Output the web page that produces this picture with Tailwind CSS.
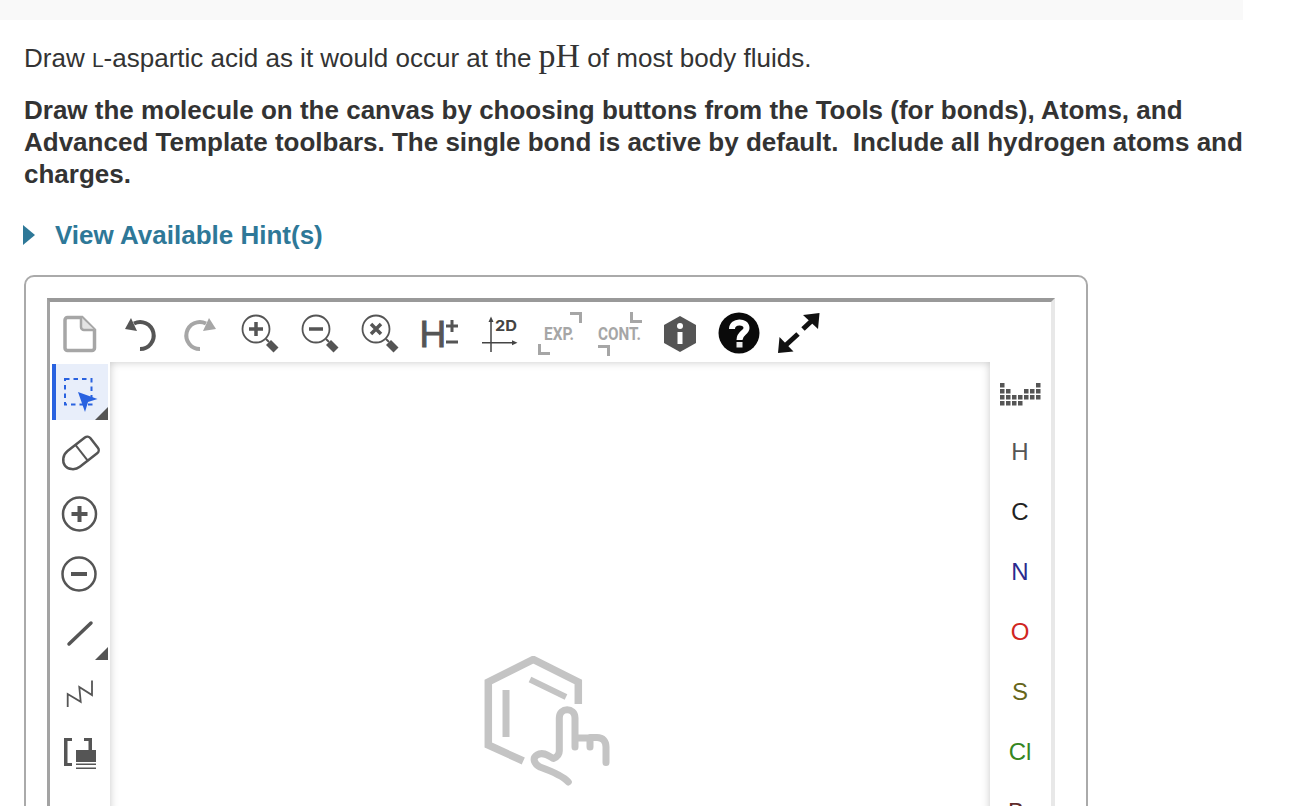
<!DOCTYPE html>
<html lang="en">
<head>
  <meta charset="UTF-8" />
  <title>L-aspartic acid</title>
  <script src="https://cdn.jsdelivr.net/npm/@tailwindcss/browser@4"></script>
</head>
<body class="h-[806px] overflow-hidden bg-white text-[#333] font-['Liberation_Sans',Arial,sans-serif]">
  <div class="h-5 w-[1243px] bg-[#f9f9f9]"></div>

  <div class="w-[1243px] pl-6">
    <p class="mt-[19px] h-8 text-[26px] leading-8">Draw <span class="text-[21px]">L</span>-aspartic acid as it would occur at the <span class="font-['Liberation_Serif',serif] text-[34px] leading-none">pH</span> of most body fluids.</p>
    <p class="mt-[23px] text-[26px] leading-8 font-bold">Draw the molecule on the canvas by choosing buttons from the Tools (for bonds), Atoms, and Advanced Template toolbars. The single bond is active by default.&nbsp; Include all hydrogen atoms and charges.</p>

    <div class="mt-[29px] flex h-8 items-center text-[26px] leading-8 font-bold text-[#2e7898]">
      <span class="h-0 w-0 -ml-px border-y-[10px] border-l-[12px] border-y-transparent border-l-[#2e7898]"></span>
      <span class="ml-5">View Available Hint(s)</span>
    </div>

    <!-- marvin sketcher -->
    <div class="mt-6 w-[1064px] rounded-t-[10px] border-2 border-[#aaa] pt-[21px] pl-[21px] h-[600px]">
      <div class="w-[1008px] h-[560px] border-t-4 border-l-[3px] border-r-4 border-t-[#999] border-l-[#a3a3a3] border-r-[#e8e8e8]">

        <!-- top toolbar -->
        <div class="flex h-[60px]">
          <svg class="h-[60px] w-[60px]" viewBox="50 302 60 60" fill="none" stroke="#a6a6a6" stroke-width="3.500">
            <path d="M67.500 317.500H82L94.500 330V348a2.500 2.500 0 0 1-2.500 2.500H67.500a2.500 2.500 0 0 1-2.500-2.500V320a2.500 2.500 0 0 1 2.500-2.500Z" />
            <path d="M81 317V327a3 3 0 0 0 3 3H94.500" fill="#e4e4e4" stroke-width="2.500" />
          </svg>
          <svg class="h-[60px] w-[60px]" viewBox="110 302 60 60" fill="none" stroke="#555" stroke-width="4">
            <path d="M134 323.500A13.500 13.500 0 1 1 140 349" />
            <path d="M125 329L131 318L137 331Z" fill="#555" stroke="none" />
          </svg>
          <svg class="h-[60px] w-[60px]" viewBox="170 302 60 60" fill="none" stroke="#a6a6a6" stroke-width="4">
            <path d="M206 323.500A13.500 13.500 0 1 0 200 349" />
            <path d="M216 329L209 318L203 331Z" fill="#a6a6a6" stroke="none" />
          </svg>
          <svg class="h-[60px] w-[60px]" viewBox="230 302 60 60" fill="none" stroke="#555">
            <circle cx="256" cy="329" r="13.500" stroke-width="1.800" />
            <path d="M249 329H263M256 322V336" stroke-width="3.500" />
            <path d="M266 339L269 342" stroke-width="2" />
            <path d="M268.500 342.500L276 350" stroke-width="7" />
          </svg>
          <svg class="h-[60px] w-[60px]" viewBox="290 302 60 60" fill="none" stroke="#555">
            <circle cx="316" cy="329" r="13.500" stroke-width="1.800" />
            <path d="M309 329H323" stroke-width="3.500" />
            <path d="M326 339L329 342" stroke-width="2" />
            <path d="M328.500 342.500L336 350" stroke-width="7" />
          </svg>
          <svg class="h-[60px] w-[60px]" viewBox="350 302 60 60" fill="none" stroke="#555">
            <circle cx="376" cy="329" r="13.500" stroke-width="1.800" />
            <path d="M371 324L381 334M381 324L371 334" stroke-width="3.500" />
            <path d="M386 339L389 342" stroke-width="2" />
            <path d="M388.500 342.500L396 350" stroke-width="7" />
          </svg>
          <svg class="h-[60px] w-[60px]" viewBox="410 302 60 60" fill="#555">
            <text x="419.500" y="347" font-size="37" font-family="Liberation Sans" stroke="#555" stroke-width="0.900">H</text>
            <path d="M446 324.500H458V327.500H446ZM450.500 320H453.500V332H450.500ZM446 340.500H458V343.500H446Z" />
          </svg>
          <svg class="h-[60px] w-[60px]" viewBox="470 302 60 60" fill="none" stroke="#444" stroke-width="1.500">
            <path d="M491 320V352M482 342.700H514" />
            <path d="M491 316.500L493.500 322H488.500ZM517.500 342.700L512 340.200V345.200Z" fill="#444" stroke="none" />
            <text x="495" y="331" font-size="14.500" font-weight="700" font-family="Inter" fill="#444" stroke="none" textLength="22" lengthAdjust="spacingAndGlyphs">2D</text>
          </svg>
          <svg class="h-[60px] w-[60px]" viewBox="530 302 60 60" fill="none" stroke="#a6a6a6" stroke-width="3">
            <path d="M570 313.500H580.500V323M539.500 344V353.500H550" />
            <text x="544" y="340" font-size="18" font-weight="700" font-family="Roboto" fill="#a6a6a6" stroke="none" textLength="30" lengthAdjust="spacingAndGlyphs">EXP.</text>
          </svg>
          <svg class="h-[60px] w-[60px]" viewBox="590 302 60 60" fill="none" stroke="#a6a6a6" stroke-width="3">
            <path d="M631.500 312V321.500H642M598 346.500H608.500V356" />
            <text x="598" y="340" font-size="18" font-weight="700" font-family="Roboto" fill="#a6a6a6" stroke="none" textLength="43" lengthAdjust="spacingAndGlyphs">CONT.</text>
          </svg>
          <svg class="h-[60px] w-[60px]" viewBox="650 302 60 60">
            <path d="M680 316L696 325V343L680 352L664 343V325Z" fill="#555" />
            <circle cx="680" cy="326" r="3" fill="#fff" />
            <path d="M677.500 332H682.500V344H677.500Z" fill="#fff" />
          </svg>
          <svg class="h-[60px] w-[60px]" viewBox="710 302 60 60">
            <circle cx="739" cy="333" r="20.500" fill="#0a0a0a" />
            <path d="M732 329C732 320.500 746.500 320.500 746.500 328C746.500 333 739.500 332.500 739.500 340" fill="none" stroke="#fff" stroke-width="6" />
            <path d="M736.500 342H742.500V347.500H736.500Z" fill="#e8e8e8" />
          </svg>
          <svg class="h-[60px] w-[60px]" viewBox="770 302 60 60" fill="#111">
            <path d="M819.500 313L818 329L803 315Z" />
            <path d="M778 353L779.500 337L793.500 351.500Z" />
            <path d="M811 321.500L803 329M798 334L786 345" fill="none" stroke="#111" stroke-width="5" />
          </svg>
        </div>

        <div class="flex h-[500px]">
          <!-- left toolbar -->
          <div class="w-[60px] shrink-0">
            <div class="h-[60px] pt-[2px] pl-[2px]">
              <div class="h-14 w-14 border-l-4 border-[#2962e0] bg-[#e8eefa]">
                <svg class="h-14 w-[52px]" viewBox="56 364 52 56">
                  <rect x="65" y="379" width="26.500" height="25.500" fill="none" stroke="#2962e0" stroke-width="2" stroke-dasharray="4.500 4" />
                  <path d="M78 392L97.500 399L88 402L85 412Z" fill="#2962e0" />
                  <path d="M108 407V420H95Z" fill="#555" />
                </svg>
              </div>
            </div>
            <svg class="h-[60px] w-[60px]" viewBox="50 422 60 60" fill="none" stroke="#555" stroke-width="2.500">
              <g transform="rotate(-38 80 454)">
                <path d="M61 454C61 449 66 444 72 444H94A4 4 0 0 1 98 448V460A4 4 0 0 1 94 464H72C66 464 61 459 61 454Z" />
                <path d="M82 444V464" stroke-width="2" />
              </g>
            </svg>
            <svg class="h-[60px] w-[60px]" viewBox="50 482 60 60" fill="none" stroke="#555">
              <circle cx="79.500" cy="514" r="16.500" stroke-width="2.500" />
              <path d="M71.500 514H87.500M79.500 506V522" stroke-width="4" />
            </svg>
            <svg class="h-[60px] w-[60px]" viewBox="50 542 60 60" fill="none" stroke="#555">
              <circle cx="79" cy="574" r="16.500" stroke-width="2.500" />
              <path d="M71 574H87" stroke-width="4" />
            </svg>
            <svg class="h-[60px] w-[60px]" viewBox="50 602 60 60">
              <path d="M69 644L91 623" stroke="#555" stroke-width="3.500" stroke-linecap="round" />
              <path d="M108 647V660H95Z" fill="#555" />
            </svg>
            <svg class="h-[60px] w-[60px]" viewBox="50 662 60 60">
              <path d="M67.700 707V694L80.700 701.700L79.300 687L92 695V680.500" fill="none" stroke="#555" stroke-width="1.800" />
            </svg>
            <svg class="h-[60px] w-[60px]" viewBox="50 722 60 60" fill="#555">
              <path d="M72 738V741H67.500V763H72V766H64V738Z" />
              <path d="M84 738H92V752H88.500V741H84Z" />
              <path d="M76 750H96V762H76ZM76 763.500H96V765H76ZM76 767.500H96V769H76Z" />
            </svg>
          </div>

          <!-- canvas -->
          <div class="w-[880px] shrink-0 shadow-[inset_0_0_9px_rgba(0,0,0,0.22)]">
            <svg class="mt-[294px] ml-[370px] h-[136px] w-[136px]" viewBox="480 654 136 136" fill="none" stroke="#c4c4c4">
              <path d="M578.300 702V680L533.300 657.500L488.300 680V743L523.300 759" stroke-width="7.500" />
              <path d="M530 677.500L566 695" stroke-width="6" />
              <path d="M506 688V735" stroke-width="7" />
              <path d="M568.300 780C563 774 551 769 540 765C534 762 532 756 537 753C543 749 549 754 553.300 756.500C557 755 559.300 753 559.300 749V716C559.300 705 575 705 575 716V745M575 736H590V745M590 735.500H597C603 735.500 606 739 606 745V760.500" stroke-width="7" stroke-linecap="round" stroke-linejoin="round" />
            </svg>
          </div>

          <!-- atoms -->
          <div class="w-[61px] shrink-0 pr-px text-[24px] leading-none">
            <div class="flex h-[60px] justify-start pl-[10px] pt-[21px]">
              <svg class="h-[24px] w-[42px]" viewBox="0 0 42 24" fill="#555">
                <path d="M0 0h4.500v4.500H0ZM36 0h4.500v4.500H36ZM0 6h4.500v4.500H0ZM6 6h4.500v4.500H6ZM24 6h4.500v4.500H24ZM30 6h4.500v4.500H30ZM36 6h4.500v4.500H36ZM0 12h4.500v4.500H0ZM6 12h4.500v4.500H6ZM12 12h4.500v4.500H12ZM18 12h4.500v4.500H18ZM24 12h4.500v4.500H24ZM30 12h4.500v4.500H30ZM36 12h4.500v4.500H36ZM0 18h4.500v4.500H0ZM6 18h4.500v4.500H6ZM12 18h4.500v4.500H12ZM18 18h4.500v4.500H18Z" />
              </svg>
            </div>
            <div class="flex h-[60px] items-center justify-center text-[#555]">H</div>
            <div class="flex h-[60px] items-center justify-center text-[#222]">C</div>
            <div class="flex h-[60px] items-center justify-center text-[#2a2a8e]">N</div>
            <div class="flex h-[60px] items-center justify-center text-[#d0261f]">O</div>
            <div class="flex h-[60px] items-center justify-center text-[#66661a]">S</div>
            <div class="flex h-[60px] items-center justify-center text-[#35861f]">Cl</div>
            <div class="flex h-[60px] items-center justify-center text-[#5e2b2b]">Br</div>
          </div>
        </div>
      </div>
    </div>
  </div>
</body>
</html>
